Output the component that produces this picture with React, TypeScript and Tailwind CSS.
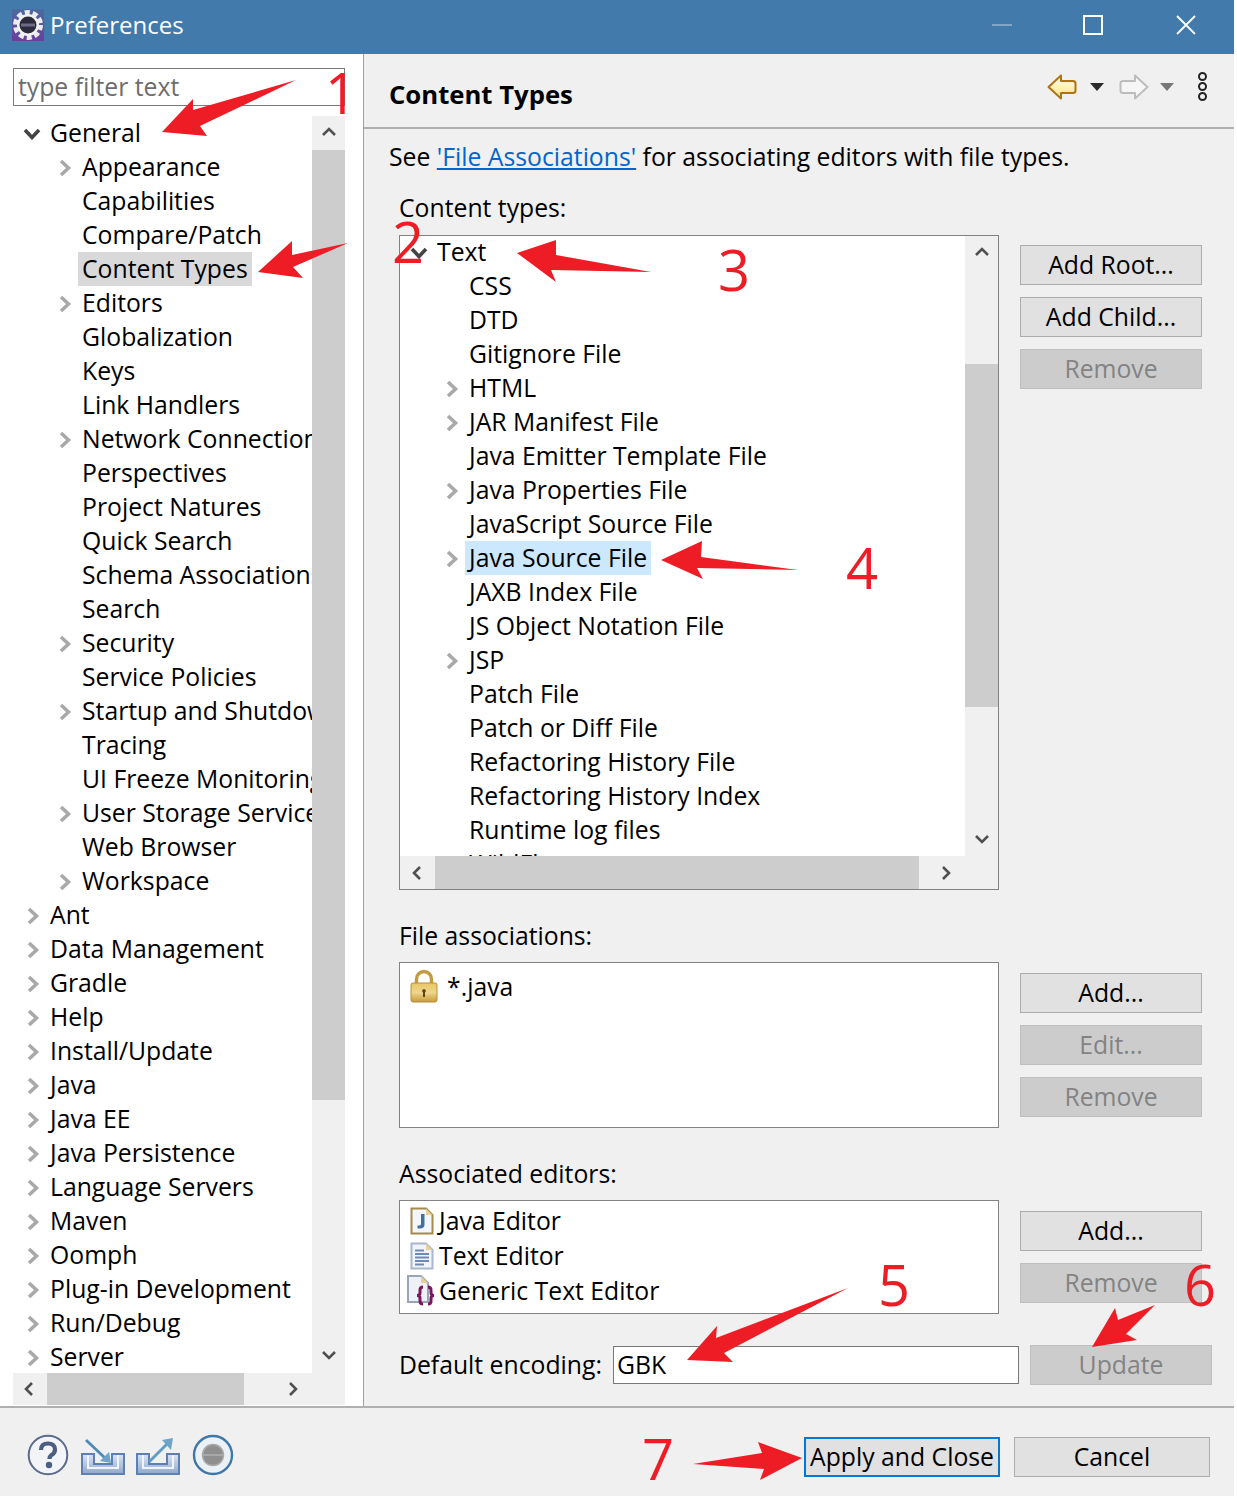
import React from "react"

const FONT = "font-['Open_Sans','Liberation_Sans',sans-serif]"

const leftTree: [string, number, number][] = [
    // label, depth, arrow (0 none, 1 collapsed, 2 expanded)
    ["General", 0, 2], ["Appearance", 1, 1], ["Capabilities", 1, 0], ["Compare/Patch", 1, 0], ["Content Types", 1, 0],
    ["Editors", 1, 1], ["Globalization", 1, 0], ["Keys", 1, 0], ["Link Handlers", 1, 0], ["Network Connections", 1, 1],
    ["Perspectives", 1, 0], ["Project Natures", 1, 0], ["Quick Search", 1, 0], ["Schema Associations", 1, 0], ["Search", 1, 0],
    ["Security", 1, 1], ["Service Policies", 1, 0], ["Startup and Shutdown", 1, 1], ["Tracing", 1, 0], ["UI Freeze Monitoring", 1, 0],
    ["User Storage Service", 1, 1], ["Web Browser", 1, 0], ["Workspace", 1, 1], ["Ant", 0, 1], ["Data Management", 0, 1],
    ["Gradle", 0, 1], ["Help", 0, 1], ["Install/Update", 0, 1], ["Java", 0, 1], ["Java EE", 0, 1],
    ["Java Persistence", 0, 1], ["Language Servers", 0, 1], ["Maven", 0, 1], ["Oomph", 0, 1], ["Plug-in Development", 0, 1],
    ["Run/Debug", 0, 1], ["Server", 0, 1],
]

const contentTree: [string, number, number][] = [
    ["Text", 0, 2], ["CSS", 1, 0], ["DTD", 1, 0], ["Gitignore File", 1, 0], ["HTML", 1, 1], ["JAR Manifest File", 1, 1],
    ["Java Emitter Template File", 1, 0], ["Java Properties File", 1, 1], ["JavaScript Source File", 1, 0], ["Java Source File", 1, 1],
    ["JAXB Index File", 1, 0], ["JS Object Notation File", 1, 0], ["JSP", 1, 1], ["Patch File", 1, 0], ["Patch or Diff File", 1, 0],
    ["Refactoring History File", 1, 0], ["Refactoring History Index", 1, 0], ["Runtime log files", 1, 0], ["WildFly", 1, 0],
]

function Chevron({ dir, className }: { dir: "up" | "down" | "left" | "right"; className?: string }) {
    const pts = {
        up: "2,10 8,4 14,10",
        down: "2,5 8,11 14,5",
        left: "10,2 4,8 10,14",
        right: "5,2 11,8 5,14",
    }[dir]
    return (
        <svg width="16" height="16" viewBox="0 0 16 16" className={className}>
            <polyline points={pts} fill="none" stroke="currentColor" strokeWidth="2.6" />
        </svg>
    )
}

function TreeRow({ label, depth, arrow, selected }: { label: string; depth: number; arrow: number; selected?: string }) {
    return (
        <div className={`flex h-[34px] items-center whitespace-nowrap ${depth === 0 ? "pl-[8px]" : "pl-[40px]"}`}>
            <div className="flex w-[30px] shrink-0 items-center">
                {arrow === 1 && (
                    <svg width="13" height="18" viewBox="0 0 13 18" className="mt-[2px] ml-[6px]">
                        <polyline points="2,2 9.5,9 2,16" fill="none" stroke="#a9a9a9" strokeWidth="3.6" />
                    </svg>
                )}
                {arrow === 2 && (
                    <svg width="18" height="12" viewBox="0 0 18 12" className="mt-[1px] ml-[2px]">
                        <polyline points="2,2 9,9.5 16,2" fill="none" stroke="#444444" strokeWidth="3.6" />
                    </svg>
                )}
            </div>
            <span className={`-ml-[5px] h-[34px] px-[4px] leading-[34px] ${selected ?? ""}`}>{label}</span>
        </div>
    )
}

function Btn({ label, disabled, focused, className }: { label: string; disabled?: boolean; focused?: boolean; className?: string }) {
    const look = disabled
        ? "border-[#bfbfbf] bg-[#cccccc] text-[#838383]"
        : focused
          ? "border-2 border-[#0078d7] bg-[#e1e1e1] text-black"
          : "border-[#adadad] bg-[#e1e1e1] text-black"
    return (
        <div className={`flex h-[40px] items-center justify-center border whitespace-nowrap ${look} ${className ?? "w-[182px]"}`}>
            {label}
        </div>
    )
}

function AppIcon() {
    return (
        <svg width="32" height="32" viewBox="0 0 32 32">
            <defs>
                <linearGradient id="app-bg" x1="0" y1="0" x2="0" y2="1">
                    <stop offset="0" stopColor="#4c6b9e" />
                    <stop offset="1" stopColor="#6a3f9e" />
                </linearGradient>
            </defs>
            <rect width="32" height="32" fill="url(#app-bg)" />
            <circle cx="16" cy="16" r="12.5" fill="none" stroke="#ececec" strokeWidth="5" strokeDasharray="5 2.9" />
            <circle cx="16" cy="16" r="11" fill="#f2f2f2" />
            <circle cx="16" cy="16" r="8.5" fill="#2b2b3d" />
            <rect x="9" y="14.5" width="14" height="3" fill="#6f6a86" />
        </svg>
    )
}

function NavArrow({ back }: { back?: boolean }) {
    return (
        <svg width="30" height="26" viewBox="0 0 30 26">
            {back && (
                <defs>
                    <linearGradient id="nav-back" x1="0" y1="0" x2="0" y2="1">
                        <stop offset="0" stopColor="#fffdf0" />
                        <stop offset="1" stopColor="#ffe48a" />
                    </linearGradient>
                </defs>
            )}
            <path
                d={back ? "M1.5 13 L14 1.5 V7 H26 Q28.5 7 28.5 9.5 V16.5 Q28.5 19 26 19 H14 V24.5 Z" : "M28.5 13 L16 1.5 V7 H4 Q1.5 7 1.5 9.5 V16.5 Q1.5 19 4 19 H16 V24.5 Z"}
                fill={back ? "url(#nav-back)" : "#f6f6f6"}
                stroke={back ? "#b0740f" : "#bdbdbd"}
                strokeWidth="2"
                strokeLinejoin="round"
            />
        </svg>
    )
}

function Lock() {
    return (
        <svg width="28" height="34" viewBox="0 0 28 34">
            <defs>
                <linearGradient id="lock-body" x1="0" y1="0" x2="0" y2="1">
                    <stop offset="0" stopColor="#e8c766" />
                    <stop offset="0.5" stopColor="#f0d68c" />
                    <stop offset="1" stopColor="#c79a3c" />
                </linearGradient>
            </defs>
            <path d="M6.5 15 V10 A7.5 7.5 0 0 1 21.5 10 V15" fill="none" stroke="#c39a42" strokeWidth="3.4" />
            <rect x="1" y="14" width="26" height="19" rx="2" fill="url(#lock-body)" stroke="#b88f36" />
            <path d="M14 20 a2 2 0 0 1 1 3.6 V28 h-2 V23.6 A2 2 0 0 1 14 20 Z" fill="#5d4516" />
        </svg>
    )
}

function JavaFile() {
    return (
        <svg width="24" height="28" viewBox="0 0 24 28">
            <path d="M1.5 1.5 H16 L22.5 8 V26.5 H1.5 Z" fill="#f3f6fb" stroke="#a58a4c" strokeWidth="2" />
            <path d="M16 1.5 V8 H22.5 Z" fill="#e8cf9a" />
            <path d="M14.5 7 V17.5 Q14.5 21.5 10 21.5 H7.5 V18.5 H9.5 Q11 18.5 11 16.5 V7 Z" fill="#44709f" />
        </svg>
    )
}

function TextFile() {
    return (
        <svg width="24" height="28" viewBox="0 0 24 28">
            <path d="M1.5 1.5 H16 L22.5 8 V26.5 H1.5 Z" fill="#f1f4fa" stroke="#a9b6cc" strokeWidth="2" />
            <path d="M16 1.5 V8 H22.5 Z" fill="#e8cf9a" />
            <path d="M5 8.5 H14 M5 12 H19 M5 15.5 H19 M5 19 H19 M5 22.5 H14" stroke="#6f8bb5" strokeWidth="2" />
        </svg>
    )
}

function GenericFile() {
    return (
        <svg width="32" height="32" viewBox="0 0 32 32">
            <path d="M1 1 H14 L21 8 V27 H1 Z" fill="#eef1f6" stroke="#9aa6b8" strokeWidth="2" />
            <path d="M14 1 V8 H21 Z" fill="#e8cf9a" />
            <path
                d="M16 12 Q13 12 13 15 V18 Q13 20.5 10 20.5 Q13 20.5 13 23 V26 Q13 29 16 29 M21 12 Q24 12 24 15 V18 Q24 20.5 27 20.5 Q24 20.5 24 23 V26 Q24 29 21 29"
                fill="none"
                stroke="#7d1560"
                strokeWidth="3"
            />
        </svg>
    )
}

function HelpIcon() {
    return (
        <svg width="42" height="42" viewBox="0 0 42 42">
            <circle cx="21" cy="21" r="19.3" fill="#f3f4f7" stroke="#5a6b8c" strokeWidth="2" />
            <path d="M14 16 Q14 9.5 21 9.5 Q28 9.5 28 15.5 Q28 19 24.5 21 Q22.5 22.5 22.5 25" fill="none" stroke="#4d5f80" strokeWidth="4.2" />
            <circle cx="22" cy="31" r="3.2" fill="#4d5f80" />
        </svg>
    )
}

function ImportExport({ out }: { out?: boolean }) {
    const id = out ? "tray-out" : "tray-in"
    return (
        <svg width="44" height="40" viewBox="0 0 44 40">
            <defs>
                <linearGradient id={id} x1="0" y1="0" x2="0" y2="1">
                    <stop offset="0" stopColor="#dbe4f2" />
                    <stop offset="1" stopColor="#8fa8ce" />
                </linearGradient>
            </defs>
            <path d="M1 19 H13 V29 H31 V19 H43 V39 H1 Z" fill={`url(#${id})`} stroke="#5e7fb4" strokeWidth="2" />
            <path d="M7 20 V33 H37 V20" fill="none" stroke="#f1f4fa" strokeWidth="2" />
            {out ? (
                <>
                    <path d="M13 27 L31 9" stroke="#5f9cc5" strokeWidth="2.8" />
                    <path d="M37 3 L26 5 L35 15 Z" fill="#6fa3c8" />
                </>
            ) : (
                <>
                    <path d="M5 5 L24 23" stroke="#4f8ab5" strokeWidth="2.8" />
                    <path d="M30 28 L28 17 L19 26 Z" fill="#6fa3c8" />
                </>
            )}
        </svg>
    )
}

function RecordIcon() {
    return (
        <svg width="42" height="42" viewBox="0 0 42 42">
            <circle cx="21" cy="21" r="19" fill="#eaf1f7" stroke="#3f78a8" strokeWidth="2.4" />
            <circle cx="21" cy="21" r="10.5" fill="#8f8f8f" stroke="#a9a9a9" strokeWidth="1.5" />
            <rect x="11" y="20" width="20" height="2" fill="#a8a8a8" />
        </svg>
    )
}

// red callouts drawn over the dialog
function Annotations() {
    const arrows = [
        "296,80 193,110 193,99 162,132 207,136 200,126",
        "348,243 292,255 292,241 258,272 303,278 293,267",
        "651,272 556,255 556,240 517,253 556,282 551,270",
        "798,570 701,557 702,541 661,560 703,579 697,568",
        "848,1288 716,1338 717,1326 687,1360 733,1362 724,1353",
        "1155,1305 1118,1320 1115,1308 1092,1347 1137,1340 1126,1334",
        "693,1464 762,1453 758,1442 802,1458 760,1480 764,1469",
    ]
    const numbers = [
        { n: "1", cls: "left-[325px] top-[54px]" },
        { n: "2", cls: "left-[392px] top-[203px]" },
        { n: "3", cls: "left-[718px] top-[231px]" },
        { n: "4", cls: "left-[846px] top-[529px]" },
        { n: "5", cls: "left-[878px] top-[1246px]" },
        { n: "6", cls: "left-[1184px] top-[1246px]" },
        { n: "7", cls: "left-[642px] top-[1420px]" },
    ]
    return (
        <>
            <svg width="1237" height="1496" viewBox="0 0 1237 1496" className="pointer-events-none absolute top-0 left-0">
                {arrows.map((p, i) => (
                    <polygon key={i} points={p} fill="#ee1c25" />
                ))}
            </svg>
            {numbers.map(({ n, cls }) => (
                <span key={n} className={`absolute ${cls} text-[56px] leading-[76px] font-normal text-[#ee1c25] font-['Open_Sans',sans-serif]`}>
                    {n}
                </span>
            ))}
        </>
    )
}

export default function App() {
    return (
        <div className={`relative h-[1496px] w-[1237px] overflow-hidden bg-white text-[24.75px] text-black ${FONT}`}>
            <div className="flex h-[1496px] w-[1234px] flex-col bg-[#f0f0f0]">
                {/* Title bar */}
                <div className="flex h-[54px] shrink-0 items-center bg-[#417aab] pb-[4px] pl-[12px] text-white">
                    <AppIcon />
                    <span className="ml-[6px] text-[24px]">Preferences</span>
                    <div className="ml-auto flex items-center pr-[38px]">
                        <div className="h-[2px] w-[20px] bg-[#7ea5c6]" />
                        <div className="ml-[71px] h-[20px] w-[20px] border-2 border-white" />
                        <svg width="20" height="20" viewBox="0 0 20 20" className="ml-[73px]">
                            <path d="M1 1 L19 19 M19 1 L1 19" stroke="white" strokeWidth="1.8" />
                        </svg>
                    </div>
                </div>

                <div className="flex h-[1352px] shrink-0">
                    {/* Left tree panel */}
                    <div className="flex w-[364px] shrink-0 flex-col border-r border-[#a0a0a0] bg-white pl-[13px]">
                        <div className="mt-[14px] flex h-[38px] w-[332px] items-center border border-[#7a7a7a] pl-[4px] text-[#6d6d6d]">type filter text</div>
                        <div className="mt-[10px] w-[332px]">
                            <div className="flex h-[1257px]">
                                <div className="w-[299px] overflow-hidden">
                                    {leftTree.map(([label, depth, arrow]) => (
                                        <TreeRow key={label} label={label} depth={depth} arrow={arrow} selected={label === "Content Types" ? "bg-[#d9d9d9]" : ""} />
                                    ))}
                                </div>
                                <div className="flex w-[33px] flex-col bg-[#f0f0f0]">
                                    <div className="flex h-[34px] items-center justify-center text-[#505050]"><Chevron dir="up" /></div>
                                    <div className="h-[950px] bg-[#cdcdcd]" />
                                    <div className="mt-auto mb-[10px] flex h-[16px] items-center justify-center text-[#505050]"><Chevron dir="down" /></div>
                                </div>
                            </div>
                            <div className="flex h-[32px] items-center bg-[#f0f0f0] text-[#505050]">
                                <div className="flex w-[34px] justify-center"><Chevron dir="left" /></div>
                                <div className="h-full w-[197px] bg-[#cdcdcd]" />
                                <Chevron dir="right" className="ml-[41px]" />
                            </div>
                        </div>
                    </div>

                    {/* Content types page */}
                    <div className="flex-1">
                        <div className="flex h-[75px] items-center border-b-2 border-[#b0b0b0] pl-[25px]">
                            <span className="mt-[9px] text-[25.7px] font-bold">Content Types</span>
                            <div className="-mt-[8px] ml-auto flex items-center pr-[27px]">
                                <NavArrow back />
                                <div className="ml-[13px] h-0 w-0 border-x-[7px] border-t-[8px] border-x-transparent border-t-[#2a2a2a]" />
                                <div className="ml-[15px]"><NavArrow /></div>
                                <div className="ml-[11px] h-0 w-0 border-x-[7px] border-t-[8px] border-x-transparent border-t-[#777777]" />
                                <div className="ml-[24px] flex flex-col gap-[1px]">
                                    <div className="h-[9px] w-[9px] rounded-full border-2 border-[#222222]" />
                                    <div className="h-[9px] w-[9px] rounded-full border-2 border-[#222222]" />
                                    <div className="h-[9px] w-[9px] rounded-full border-2 border-[#222222]" />
                                </div>
                            </div>
                        </div>

                        <div className="mt-[10px] h-[34px] pl-[25px] leading-[36px] whitespace-nowrap">
                            See <span className="text-[#0066cc] underline">'File Associations'</span> for associating editors with file types.
                        </div>

                        <div className="pl-[35px]">
                            <div className="mt-[17px] h-[34px] leading-[36px]">Content types:</div>
                            <div className="mt-[11px] flex h-[655px]">
                                <div className="flex h-full w-[600px] flex-col border border-[#828282] bg-white">
                                    <div className="flex h-[620px]">
                                        <div className="w-[565px] overflow-hidden">
                                            <div className="-mt-[1px]">
                                                {contentTree.map(([label, depth, arrow]) => (
                                                    <TreeRow key={label} label={label} depth={depth} arrow={arrow} selected={label === "Java Source File" ? "bg-[#cce8ff]" : ""} />
                                                ))}
                                            </div>
                                        </div>
                                        <div className="flex w-[33px] flex-col bg-[#f0f0f0]">
                                            <div className="flex h-[128px] justify-center pt-[9px] text-[#505050]"><Chevron dir="up" /></div>
                                            <div className="h-[343px] bg-[#cdcdcd]" />
                                            <div className="mt-auto mb-[9px] flex justify-center text-[#505050]"><Chevron dir="down" /></div>
                                        </div>
                                    </div>
                                    <div className="flex h-[33px] items-center bg-[#f0f0f0] text-[#505050]">
                                        <div className="flex w-[35px] justify-center"><Chevron dir="left" /></div>
                                        <div className="h-full w-[484px] bg-[#cdcdcd]" />
                                        <Chevron dir="right" className="ml-[19px]" />
                                    </div>
                                </div>
                                <div className="ml-[21px] flex flex-col gap-[12px] pt-[10px]">
                                    <Btn label="Add Root..." />
                                    <Btn label="Add Child..." />
                                    <Btn label="Remove" disabled />
                                </div>
                            </div>

                            <div className="mt-[28px] h-[34px] leading-[36px]">File associations:</div>
                            <div className="mt-[10px] flex h-[166px]">
                                <div className="h-full w-[600px] border border-[#828282] bg-white pt-[3px] pl-[10px]">
                                    <div className="flex items-center">
                                        <Lock />
                                        <span className="mt-[2px] ml-[9px]">*.java</span>
                                    </div>
                                </div>
                                <div className="ml-[21px] flex flex-col gap-[12px] pt-[11px]">
                                    <Btn label="Add..." />
                                    <Btn label="Edit..." disabled />
                                    <Btn label="Remove" disabled />
                                </div>
                            </div>

                            <div className="mt-[28px] h-[34px] leading-[36px]">Associated editors:</div>
                            <div className="mt-[10px] flex h-[114px]">
                                <div className="h-full w-[600px] border border-[#828282] bg-white pt-[2px]">
                                    <div className="flex h-[35px] items-center pl-[10px]"><JavaFile /><span className="ml-[5px]">Java Editor</span></div>
                                    <div className="flex h-[35px] items-center pl-[10px]"><TextFile /><span className="ml-[5px]">Text Editor</span></div>
                                    <div className="flex h-[35px] items-center pl-[7px]"><GenericFile /><span>Generic Text Editor</span></div>
                                </div>
                                <div className="ml-[21px] flex flex-col gap-[12px] pt-[11px]">
                                    <Btn label="Add..." />
                                    <Btn label="Remove" disabled />
                                </div>
                            </div>

                            <div className="mt-[31px] flex h-[40px] items-center">
                                <span className="w-[214px] whitespace-nowrap">Default encoding:</span>
                                <div className="flex h-[38px] w-[406px] items-center border border-[#7a7a7a] bg-white pl-[3px]">GBK</div>
                                <Btn label="Update" disabled className="ml-[11px] w-[182px]" />
                            </div>
                        </div>
                    </div>
                </div>

                {/* Button bar */}
                <div className="flex flex-1 border-t-2 border-[#b0b0b0] pl-[27px]">
                    <div className="mt-[25px] flex h-[44px] items-center">
                        <HelpIcon />
                        <div className="ml-[12px]"><ImportExport /></div>
                        <div className="ml-[11px]"><ImportExport out /></div>
                        <div className="ml-[12px]"><RecordIcon /></div>
                    </div>
                    <div className="mt-[29px] ml-auto flex gap-[14px] pr-[24px]">
                        <Btn label="Apply and Close" focused className="w-[196px]" />
                        <Btn label="Cancel" className="w-[196px]" />
                    </div>
                </div>
            </div>
            <Annotations />
        </div>
    )
}
